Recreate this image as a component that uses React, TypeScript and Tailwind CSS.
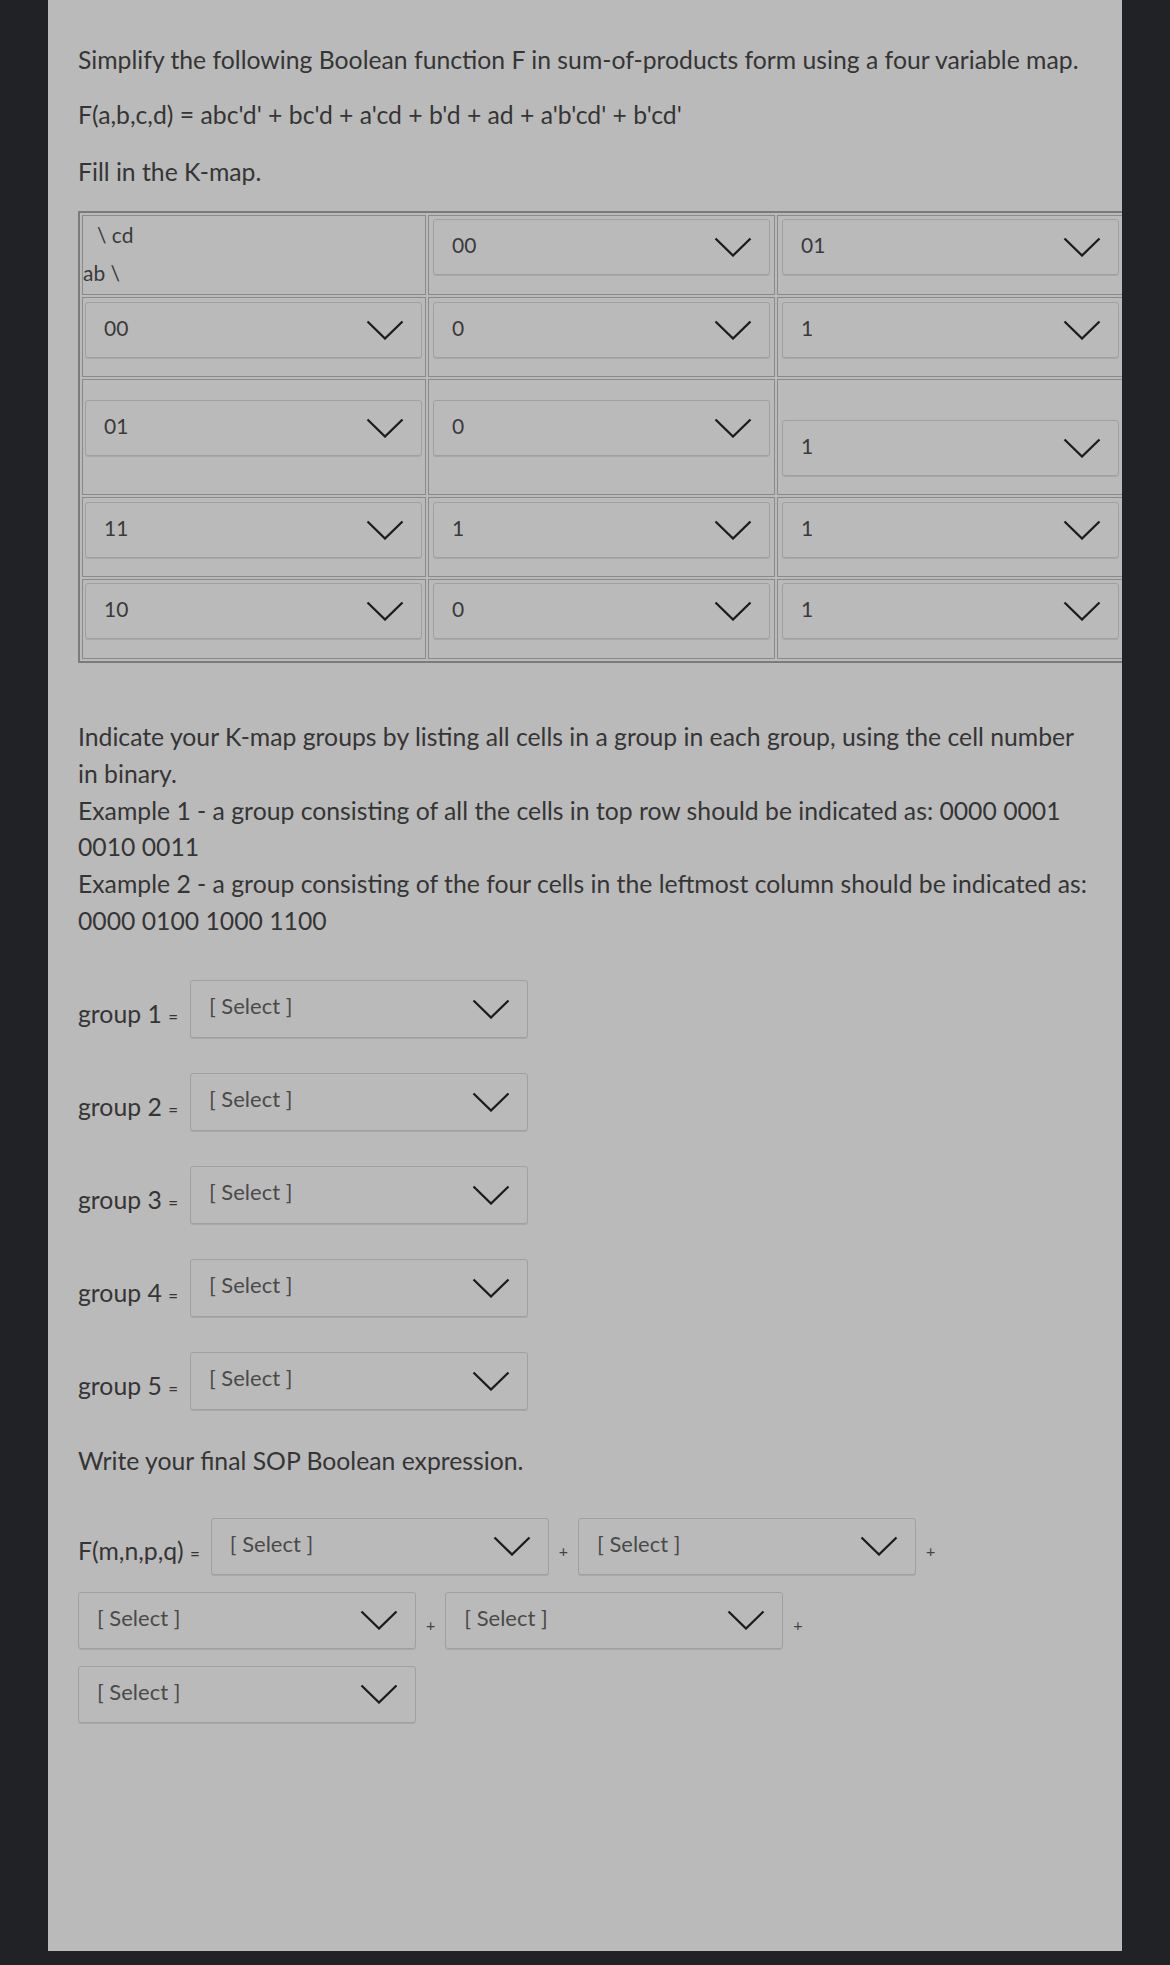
import clsx from 'clsx'

// Canvas-style quiz page shown dimmed: grey panel on a near-black backdrop.
const Chevron = () => (
  <svg width="38" height="20" viewBox="0 0 38 20" fill="none" className="shrink-0">
    <path d="M1.5 1.5 19 18.5 36.5 1.5" stroke="#1c1c1c" strokeWidth="2.3" />
  </svg>
)

function Select({ value, className, small }: { value: string; className?: string; small?: boolean }) {
  return (
    <div
      className={clsx(
        'flex items-center justify-between rounded-[3px] border border-[#a0a0a0] shadow-[0_1px_0_#a8a8a8] pl-[18px] pr-[17px]',
        className
      )}
    >
      <span className={small ? 'mb-[5px] text-[21px] text-[#3a3a3a]' : 'mb-[5px] text-[22px] text-[#4a4a4a]'}>{value}</span>
      <Chevron />
    </div>
  )
}

const rows = [
  { ab: '00', c0: '0', c1: '1', pad: ['pt-[4px]', 'pt-[4px]', 'pt-[4px]'] },
  { ab: '01', c0: '0', c1: '1', pad: ['pt-[20px]', 'pt-[20px]', 'pt-[40px]'] },
  { ab: '11', c0: '1', c1: '1', pad: ['pt-[4px]', 'pt-[4px]', 'pt-[4px]'] },
  { ab: '10', c0: '0', c1: '1', pad: ['pt-[3px]', 'pt-[3px]', 'pt-[3px]'] },
]

function KMap() {
  const cell = 'border border-[#8a8a8a]'
  return (
    <div className="w-[1050px] border-2 border-[#7b7b7b] p-[2px]">
      <div className="grid grid-cols-[344px_347px_347px] grid-rows-[80px_80px_116px_80px_80px] gap-[2px]">
        <div className={clsx(cell, 'pt-0 text-[21px] leading-[38px] text-[#3a3a3a]')}>
          <div className="pl-[14px]">\ cd</div>
          <div>ab \</div>
        </div>
        <div className={clsx(cell, 'px-[4px] pt-[3px]')}>
          <Select value="00" small className="h-[56px]" />
        </div>
        <div className={clsx(cell, 'px-[4px] pt-[3px]')}>
          <Select value="01" small className="h-[56px]" />
        </div>
        {rows.map((r) => (
          <>
            <div key={r.ab + 'a'} className={clsx(cell, 'pl-[2px] pr-[3px]', r.pad[0])}>
              <Select value={r.ab} small className="h-[56px]" />
            </div>
            <div key={r.ab + 'b'} className={clsx(cell, 'px-[4px]', r.pad[1])}>
              <Select value={r.c0} small className="h-[56px]" />
            </div>
            <div key={r.ab + 'c'} className={clsx(cell, 'px-[4px]', r.pad[2])}>
              <Select value={r.c1} small className="h-[56px]" />
            </div>
          </>
        ))}
      </div>
    </div>
  )
}

const Plus = () => <span className="mt-[10px] text-[16px] text-[#444]">+</span>

export default function App() {
  return (
    <div className="min-h-[1965px] w-full bg-[#212226] font-[Lato,'Noto_Sans',sans-serif]">
      <div className="ml-[48px] h-[1951px] w-[1074px] overflow-hidden bg-[#bababa] pl-[30px] pt-[42px] text-[24.75px] leading-[36px] text-[#353535]">
        <p className="whitespace-nowrap">
          Simplify the following Boolean function F in sum-of-products form using a four variable map.
        </p>
        <p className="mt-[19px] whitespace-nowrap">F(a,b,c,d) = abc'd' + bc'd + a'cd + b'd + ad + a'b'cd' + b'cd'</p>
        <p className="mt-[21px] mb-[21px]">Fill in the K-map.</p>

        <KMap />

        <p className="mt-[56px] whitespace-nowrap leading-[36.8px]">
          Indicate your K-map groups by listing all cells in a group in each group, using the cell number
          <br />
          in binary.
          <br />
          Example 1 - a group consisting of all the cells in top row should be indicated as: 0000 0001
          <br />
          0010 0011
          <br />
          Example 2 - a group consisting of the four cells in the leftmost column should be indicated as:
          <br />
          0000 0100 1000 1100
        </p>

        <div className="mt-[40px] flex flex-col gap-[35px]">
          {[1, 2, 3, 4, 5].map((n) => (
            <div key={n} className="flex items-center">
              <span className="mt-[14px] w-[112px] whitespace-nowrap">
                group {n} <span className="text-[17px]">=</span>
              </span>
              <Select value="[ Select ]" className="h-[58px] w-[338px]" />
            </div>
          ))}
        </div>

        <p className="mt-[33px]">Write your final SOP Boolean expression.</p>

        <div className="mt-[39px] flex w-[1044px] flex-wrap items-center gap-x-[10px] gap-y-[17px]">
          <span className="mt-[12px] mr-[1px] whitespace-nowrap">
            F(m,n,p,q) <span className="text-[17px]">=</span>
          </span>
          <Select value="[ Select ]" className="h-[57px] w-[338px]" />
          <Plus />
          <Select value="[ Select ]" className="h-[57px] w-[338px]" />
          <Plus />
          <Select value="[ Select ]" className="h-[57px] w-[338px]" />
          <Plus />
          <Select value="[ Select ]" className="h-[57px] w-[338px]" />
          <Plus />
          <Select value="[ Select ]" className="h-[57px] w-[338px]" />
        </div>
      </div>
    </div>
  )
}
